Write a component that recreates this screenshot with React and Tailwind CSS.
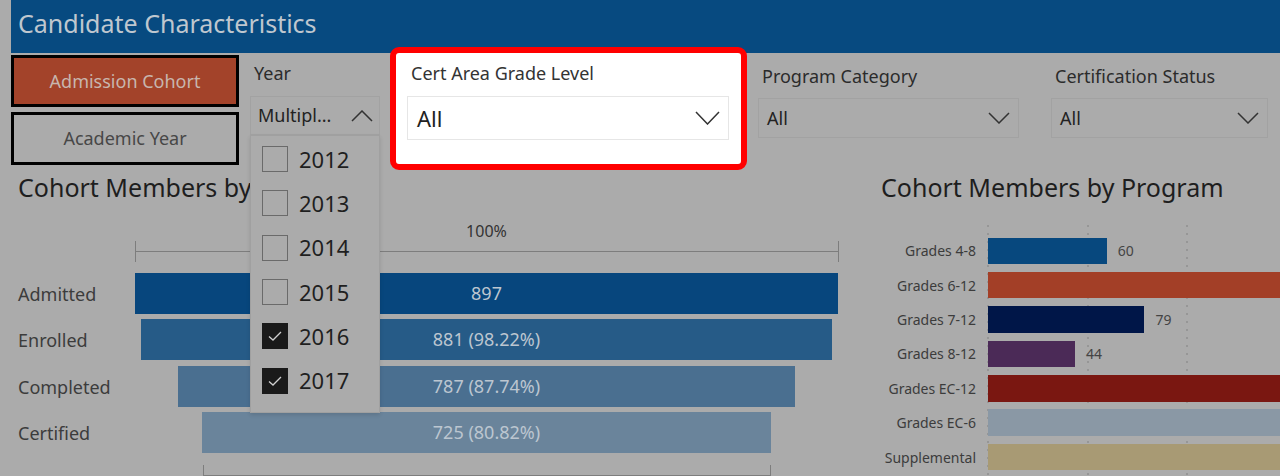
import React from 'react';

const funnel = [
  { label: 'Admitted', value: 897, text: '897', color: 'bg-[#07467d]' },
  { label: 'Enrolled', value: 881, text: '881 (98.22%)', color: 'bg-[#265b87]' },
  { label: 'Completed', value: 787, text: '787 (87.74%)', color: 'bg-[#4a6f90]' },
  { label: 'Certified', value: 725, text: '725 (80.82%)', color: 'bg-[#6a849b]' },
];

const programs = [
  { label: 'Grades 4-8', value: 60, color: 'bg-[#07487e]' },
  { label: 'Grades 6-12', value: 187, color: 'bg-[#a33f27]' },
  { label: 'Grades 7-12', value: 79, color: 'bg-[#001648]' },
  { label: 'Grades 8-12', value: 44, color: 'bg-[#4b2a57]' },
  { label: 'Grades EC-12', value: 152, color: 'bg-[#7a1711]' },
  { label: 'Grades EC-6', value: 222, color: 'bg-[#8a98a5]' },
  { label: 'Supplemental', value: 153, color: 'bg-[#a89a74]' },
];

const years = [
  { year: '2012', checked: false },
  { year: '2013', checked: false },
  { year: '2014', checked: false },
  { year: '2015', checked: false },
  { year: '2016', checked: true },
  { year: '2017', checked: true },
];

const Chevron = ({ up = false, w = 22, h = 12 }) => (
  <svg width={w} height={h} viewBox={`0 0 ${w} ${h}`} className="shrink-0">
    <path
      d={up ? `M1 ${h - 1} L${w / 2} 1 L${w - 1} ${h - 1}` : `M1 1 L${w / 2} ${h - 1} L${w - 1} 1`}
      stroke="#333"
      strokeWidth="1.5"
      fill="none"
    />
  </svg>
);

const Slicer = ({ title, className }) => (
  <div className={className}>
    <div className="pl-[4px] pt-[11px] text-[18px] leading-[24px] text-[#2b2b2b]">{title}</div>
    <div className="mt-[10px] h-[40px] border border-[#a2a2a2] flex items-center justify-between pl-[8px] pr-[8px]">
      <span className="text-[18px] text-[#222]">All</span>
      <Chevron />
    </div>
  </div>
);

export default function App() {
  return (
    <div
      className="w-[1280px] h-[476px] overflow-hidden bg-[#ababab] flex flex-col"
      style={{ fontFamily: '"Noto Sans", "Open Sans", sans-serif' }}
    >
      {/* header */}
      <div className="ml-[11px] h-[53px] shrink-0 bg-[#074a80] pl-[7px] pt-[6px]">
        <h1 className="text-[25px] leading-[34px] text-[#bfc7cf]">Candidate Characteristics</h1>
      </div>

      {/* filters */}
      <div className="h-[117px] shrink-0 flex items-start relative z-10">
        <div className="ml-[11px] w-[228px] pt-[2px] flex flex-col gap-[5px]">
          <button className="h-[52px] border-[3px] border-black bg-[#a3432a] text-[18px] text-[#c8b6ae]">
            Admission Cohort
          </button>
          <button className="h-[53px] border-[3px] border-black bg-[#ababab] text-[18px] text-[#474747]">
            Academic Year
          </button>
        </div>

        {/* year slicer, open */}
        <div className="ml-[11px] w-[130px] relative">
          <div className="pl-[4px] pt-[8px] text-[18px] leading-[24px] text-[#2b2b2b]">Year</div>
          <div className="mt-[11px] h-[39px] border border-[#a2a2a2] flex items-center justify-between pl-[7px] pr-[6px]">
            <span className="text-[18px] text-[#222]">Multipl...</span>
            <Chevron up />
          </div>
          <div className="absolute left-0 top-full w-[130px] h-[278px] bg-[#ababab] border border-[#a0a0a0] shadow-[0_2px_4px_rgba(0,0,0,0.12)] pt-[1px]">
            {years.map((y) => (
              <div key={y.year} className="h-[44.3px] flex items-center pl-[11px] gap-[11px]">
                {y.checked ? (
                  <div className="w-[26px] h-[26px] bg-[#1a1a1a] flex items-center justify-center">
                    <svg width="16" height="12" viewBox="0 0 16 12">
                      <path d="M2 6.5 L6 10 L14 2" stroke="#cfcfcf" strokeWidth="1.3" fill="none" />
                    </svg>
                  </div>
                ) : (
                  <div className="w-[26px] h-[26px] border-[1.5px] border-[#6a6a6a]" />
                )}
                <span className="text-[22px] text-[#1f1f1f]">{y.year}</span>
              </div>
            ))}
          </div>
        </div>

        {/* highlighted slicer */}
        <div className="ml-[10px] -mt-[6px] w-[357px] h-[123px] border-[6px] border-[#ff0000] rounded-[9px] bg-white pl-[11px] pr-[12px]">
          <div className="pl-[4px] pt-[8px] text-[18px] leading-[24px] text-[#333]">Cert Area Grade Level</div>
          <div className="mt-[11px] h-[44px] border border-[#e6e6e6] flex items-center justify-between pl-[9px] pr-[8px]">
            <span className="text-[22px] text-[#222]">All</span>
            <Chevron w={25} h={14} />
          </div>
        </div>

        <Slicer title="Program Category" className="ml-[11px] w-[261px]" />
        <Slicer title="Certification Status" className="ml-[32px] w-[217px]" />
      </div>

      {/* charts */}
      <div className="flex flex-1">
        {/* funnel */}
        <div className="w-[860px] shrink-0">
          <h2 className="pl-[18px] text-[25px] leading-[34px] text-[#1e1e1e] whitespace-nowrap">Cohort Members by Year</h2>
          <div className="mt-[17px] ml-[135px] w-[703px] text-center text-[16px] leading-[20px] text-[#333]">100%</div>
          <div className="ml-[135px] w-[704px] h-[21px] border-l border-r border-[#7d7d7d] flex items-center">
            <div className="w-full h-px bg-[#7d7d7d]" />
          </div>
          <div className="mt-[11px] flex flex-col gap-[5.3px]">
            {funnel.map((f) => (
              <div key={f.label} className="h-[41px] flex items-center">
                <div className="w-[135px] shrink-0 pl-[18px] pt-[2px] text-[18px] text-[#3c3c3c]">{f.label}</div>
                <div className="w-[703px] h-full flex justify-center">
                  <div
                    className={`${f.color} h-full flex items-center justify-center text-[18px] text-[#bcc6d0]`}
                    style={{ width: `${(f.value / 897) * 100}%` }}
                  >
                    {f.text}
                  </div>
                </div>
              </div>
            ))}
          </div>
          <div className="mt-[12px] ml-[203px] w-[568px] h-[11px] border-l border-r border-b border-[#7d7d7d]" />
        </div>

        {/* program bars */}
        <div className="flex-1">
          <h2 className="pl-[21px] text-[25px] leading-[34px] text-[#1e1e1e] whitespace-nowrap">Cohort Members by Program</h2>
          <div className="mt-[21px] h-[260px] relative pt-[8.6px]">
            <div className="absolute top-0 bottom-0 left-[127px] w-[2px] bg-[repeating-linear-gradient(to_bottom,#969696_0_2px,transparent_2px_8px)]" />
            <div className="absolute top-0 bottom-0 left-[227px] w-[2px] bg-[repeating-linear-gradient(to_bottom,#969696_0_2px,transparent_2px_8px)]" />
            <div className="absolute top-0 bottom-0 left-[326px] w-[2px] bg-[repeating-linear-gradient(to_bottom,#969696_0_2px,transparent_2px_8px)]" />
            {programs.map((p) => (
              <div key={p.label} className="relative h-[34.4px] flex items-center whitespace-nowrap">
                <div className="w-[116px] shrink-0 text-right text-[14px] text-[#3c3c3c]">{p.label}</div>
                <div
                  className={`${p.color} ml-[12px] h-[26.5px] shrink-0`}
                  style={{ width: `${Math.min(p.value * 1.98, 320)}px` }}
                />
                {p.value < 140 && <span className="ml-[11px] text-[14px] text-[#444]">{p.value}</span>}
              </div>
            ))}
          </div>
        </div>
      </div>
    </div>
  );
}
